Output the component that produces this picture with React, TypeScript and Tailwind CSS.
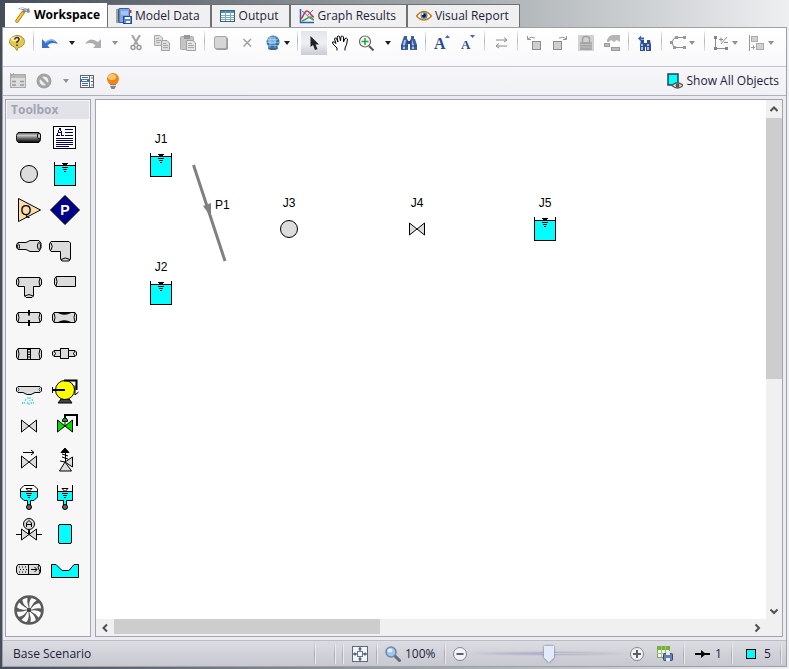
import { useState } from "react";
import type { ReactNode } from "react";

function Icon({ children }: { children: ReactNode }) {
  return (
    <svg width="16" height="16" viewBox="0 0 16 16" fill="none" className="shrink-0" aria-hidden="true">
      {children}
    </svg>
  );
}

function ToolButton({ label, active, children }: { label: string; active?: boolean; children: ReactNode }) {
  return (
    <button
      type="button"
      aria-label={label}
      className={
        active
          ? "flex h-6 w-[26px] items-center justify-center bg-linear-to-b from-[#e3e5ea] via-[#eeeff3] to-[#c9ccd6]"
          : "flex h-6 w-[26px] items-center justify-center"
      }
    >
      {children}
    </button>
  );
}

function Caret({ dim }: { dim?: boolean }) {
  return (
    <svg width="6" height="4" viewBox="0 0 6 4" className="shrink-0" aria-hidden="true">
      <path d="M0 0H6L3 4Z" fill={dim ? "#8f919c" : "#1b1b2b"} />
    </svg>
  );
}

function CaretButton({ label, dim }: { label: string; dim?: boolean }) {
  return (
    <button type="button" aria-label={label} className="flex h-6 w-[17px] items-center justify-center">
      <Caret dim={dim} />
    </button>
  );
}

function MenuButton({ label, dim, children }: { label: string; dim?: boolean; children: ReactNode }) {
  return (
    <button type="button" aria-label={label} className="flex h-6 w-9 items-center gap-[3px] pl-[5px]">
      {children}
      <Caret dim={dim} />
    </button>
  );
}

function Sep() {
  return (
    <div className="flex w-[7px] justify-center">
      <div className="h-5 w-px bg-linear-to-b from-[#eeeef2] via-[#b4b6c1] to-[#e2e3e8]" />
    </div>
  );
}

function Binoculars() {
  return (
    <>
      <path d="M3 1H6V4L7 5V15H0V10L2 4Z" fill="#3b5f9f" />
      <path d="M10 1H13V4L14 4L16 10V15H9V5L10 4Z" fill="#3b5f9f" />
      <path d="M6 6H10V9H6Z" fill="#274a86" />
      <path d="M3 5L2 10V14H4V10L5 5ZM11 5V14H13V10Z" fill="#a9c3ea" />
      <path d="M0 11H7M9 11H16" stroke="#23417a" />
    </>
  );
}

/* ---- toolbox / workspace shapes, all on a 36px cell ---- */

const GREY = "#dcdcdc";
const CYAN = "#00ffff";

function Cell({ children, smooth }: { children: ReactNode; smooth?: boolean }) {
  return (
    <svg
      width="36"
      height="36"
      viewBox="0 0 36 36"
      fill="none"
      stroke="#000"
      shapeRendering={smooth ? "auto" : "crispEdges"}
      aria-hidden="true"
    >
      {children}
    </svg>
  );
}

function Tank() {
  return (
    <Cell>
      <path d="M7.5 9.5H28.5V29.5H7.5Z" fill={CYAN} />
      <path d="M7.5 6V29.5H28.5V6" />
      <path d="M15 7H21V8H20V9H16V8H15Z" fill="#000" stroke="none" />
      <path d="M15 11.5H21M16 13.5H20M17 15.5H19" />
    </Cell>
  );
}

function Branch() {
  return (
    <Cell smooth>
      <circle cx="18" cy="18" r="8.5" fill={GREY} />
    </Cell>
  );
}

function Valve() {
  return (
    <Cell smooth>
      <path d="M10.5 12V24L18 18ZM25.5 12V24L18 18Z" fill={GREY} />
    </Cell>
  );
}

const tools: { name: string; icon: ReactNode }[] = [
  {
    name: "Pipe",
    icon: (
      <Cell smooth>
        <defs>
          <linearGradient id="pipe" x1="0" y1="0" x2="0" y2="1">
            <stop offset="0" stopColor="#555" />
            <stop offset="0.3" stopColor="#c8c8c8" />
            <stop offset="0.6" stopColor="#666" />
            <stop offset="1" stopColor="#000" />
          </linearGradient>
        </defs>
        <path d="M8 12.500H27Q29.500 12.500 29.500 17.500T27 22.500H8Q5.500 22.500 5.500 17.500T8 12.500Z" fill="url(#pipe)" />
        <ellipse cx="28" cy="16" rx="1.500" ry="3" fill="#ddd" />
      </Cell>
    ),
  },
  {
    name: "Annotation",
    icon: (
      <Cell>
        <rect x="6.500" y="6.500" width="22" height="22" fill="#fff" />
        <path d="M9 15.500H13M14 15.500H17M10.500 14.500V13M11.500 13V10M12.500 10V8M13.500 8V11M14.500 11V15M11 12.500H15M18 9.500H26M18 12.500H26M18 15.500H26M9 18.500H26M9 20.500H26M9 22.500H26M9 24.500H26M9 26.500H22" stroke="#00007a" />
      </Cell>
    ),
  },
  { name: "Branch", icon: <Branch /> },
  { name: "Reservoir", icon: <Tank /> },
  {
    name: "Assigned Flow",
    icon: (
      <Cell smooth>
        <path d="M7.500 6.500L29.500 18L7.500 29.500Z" fill="#ffdead" />
        <text x="15" y="23" textAnchor="middle" fill="#000" stroke="none" className="font-['Liberation_Sans'] text-[14px]">Q</text>
      </Cell>
    ),
  },
  {
    name: "Assigned Pressure",
    icon: (
      <Cell smooth>
        <path d="M18 3.500L32.500 18L18 32.500L3.500 18Z" fill="#00008b" />
        <text x="18" y="23" textAnchor="middle" fill="#fff" stroke="none" className="font-['Liberation_Sans'] text-[14px] font-bold">P</text>
      </Cell>
    ),
  },
  {
    name: "Area Change",
    icon: (
      <Cell smooth>
        <path d="M7 14.500H15L19 12.500H28L30 15V20L28 23.500H19L15 21.500H7L5.500 19.500V16.500Z" fill={GREY} />
        <ellipse cx="7.500" cy="18.500" rx="1" ry="2.500" fill={GREY} />
        <ellipse cx="28" cy="18" rx="1.500" ry="3.500" fill={GREY} />
      </Cell>
    ),
  },
  {
    name: "Bend",
    icon: (
      <Cell smooth>
        <path d="M4 13.500H22L23.500 15V31L22 33H15L13.500 31V23.500H4L2.500 21V16Z" fill={GREY} />
        <path d="M4 15Q6.500 18.500 4 22M14 31.500Q18 28.500 23 31.500" />
      </Cell>
    ),
  },
  {
    name: "Tee or Wye",
    icon: (
      <Cell smooth>
        <path d="M7 13.500H29L30.500 16V20L29 22.500H22.500V32L21 33.500H15L13.500 32V22.500H7L5.500 20V16Z" fill={GREY} />
        <path d="M7 14Q9 18 7 22M29 14Q27 18 29 22M14 32Q18 29 22 32" />
      </Cell>
    ),
  },
  {
    name: "Dead End",
    icon: (
      <Cell smooth>
        <path d="M9 12.500H28.500V22.500H9L7.500 20V15Z" fill={GREY} />
        <path d="M9 13Q11 17.500 9 22" />
      </Cell>
    ),
  },
  {
    name: "Orifice",
    icon: (
      <Cell smooth>
        <path d="M7 12.500H29L30.500 15V20L29 22.500H7L5.500 20V15Z" fill={GREY} />
        <path d="M7 13Q9 17.500 7 22M29 13Q27 17.500 29 22" />
        <path d="M18 10V15.500M18 20V26" strokeWidth="2" />
      </Cell>
    ),
  },
  {
    name: "Venturi",
    icon: (
      <Cell smooth>
        <path d="M7 12.500H28L29.500 15V20L28 22.500H7L5.500 20V15Z" fill={GREY} />
        <path d="M11 12.500Q17 16 24 12.500ZM11 22.500Q17 19 24 22.500Z" fill="#000" />
        <path d="M7 13Q9 17.500 7 22M28 13Q26 17.500 28 22" />
      </Cell>
    ),
  },
  {
    name: "Screen",
    icon: (
      <Cell smooth>
        <path d="M7 12.500H29L30.500 15V21L29 23.500H7L5.500 21V15Z" fill={GREY} />
        <path d="M7 13Q9 18 7 23M29 13Q27 18 29 23M16.500 13V23M19.500 13V23" />
        <path d="M18 13V23" strokeWidth="3" strokeDasharray="1 1.500" />
      </Cell>
    ),
  },
  {
    name: "General Component",
    icon: (
      <Cell smooth>
        <path d="M7 14.500H28L29.500 16V19L28 20.500H7L5.500 19V16Z" fill={GREY} />
        <path d="M7 15L8.500 17.500L7 20M28 15L26.500 17.500L28 20" />
        <rect x="13.500" y="12.500" width="8" height="10" fill={GREY} />
      </Cell>
    ),
  },
  {
    name: "Spray Discharge",
    icon: (
      <Cell smooth>
        <path d="M7 14.500H29L30.500 16V19L29 20.500H24L20 22.500H16L12 20.500H7L5.500 19V16Z" fill={GREY} />
        <path d="M7 15.500L8 17.500L7 19.500M29 15.500L28 17.500L29 19.500" stroke="#2b6f78" />
        <path d="M17 25V28M19 25V29M15 27L13 32M21 27L23 32M17 30L16 33M20 30L21 33M12 30L11 33M18 31V33" stroke="#22d3ee" strokeDasharray="2 1" />
      </Cell>
    ),
  },
  {
    name: "Pump",
    icon: (
      <Cell smooth>
        <path d="M14 27H22L25 31H11Z" fill="#444" />
        <circle cx="18" cy="18" r="9.500" fill="#ff0" />
        <path d="M6 18H18M17 8.500H29.500V18" strokeWidth="2" />
        <path d="M5.500 15V21M28 13.500V23L31.500 20" />
      </Cell>
    ),
  },
  { name: "Valve", icon: <Valve /> },
  {
    name: "Control Valve",
    icon: (
      <Cell smooth>
        <path d="M18 10V7H30V18" strokeWidth="2" />
        <path d="M10.500 12V24L18 18ZM25.500 12V24L18 18Z" fill="#00e000" />
        <path d="M18 18V13" />
        <path d="M15.500 13.500V12L17 10H19L20.500 12V13.500Z" fill="#00b000" />
      </Cell>
    ),
  },
  {
    name: "Check Valve",
    icon: (
      <Cell smooth>
        <path d="M10.500 12V24L18 18ZM25.500 12V24L18 18Z" fill={GREY} />
        <path d="M12 8.500H23M20 6L23 8.500L20 11" />
      </Cell>
    ),
  },
  {
    name: "Relief Valve",
    icon: (
      <Cell smooth>
        <path d="M18 18L12.500 27H24.500ZM18 18L25.500 13V23Z" fill={GREY} />
        <path d="M18.500 5V18M15 10L21 12M15 13L21 15M13 17L18 18" />
        <path d="M18 4L22 8.500H14Z" fill="#000" />
      </Cell>
    ),
  },
  {
    name: "Gas Accumulator",
    icon: (
      <Cell smooth>
        <path d="M9.500 11H26.500V17L23 20.500H19.500V26H16.500V20.500H13L9.500 17Z" fill={CYAN} />
        <path d="M9.500 11.500V9L13 5.500H23L26.500 9V11.500Z" fill="#fff" />
        <path d="M15 8.500H21L18 11.500Z" fill="#fff" />
        <path d="M15 13.500H21M16 15.500H20M17 17.500H19" />
        <circle cx="18" cy="27" r="2.500" fill="#666" />
      </Cell>
    ),
  },
  {
    name: "Surge Tank",
    icon: (
      <Cell smooth>
        <path d="M10.500 11.500H25.500V20.500H19.500V26H16.500V20.500H10.500Z" fill={CYAN} />
        <path d="M10.500 5V12M25.500 5V12" />
        <path d="M15 8.500H21L18 11.500Z" fill="#fff" />
        <path d="M15 13.500H21M16 15.500H20M17 17.500H19" />
        <circle cx="18" cy="27" r="2.500" fill="#666" />
      </Cell>
    ),
  },
  {
    name: "Vacuum Breaker Valve",
    icon: (
      <Cell smooth>
        <path d="M5 18.500H11M25 18.500H31" />
        <path d="M18 13V18" strokeWidth="2" />
        <path d="M10.500 13V24L18 18.500ZM25.500 13V24L18 18.500Z" fill={GREY} />
        <circle cx="18" cy="8" r="5.500" fill={GREY} />
        <path d="M15.500 11V7L18 4.500L20.500 7V11M15.500 8.500H20.500" />
      </Cell>
    ),
  },
  {
    name: "Liquid Accumulator",
    icon: (
      <Cell smooth>
        <rect x="11.500" y="8.500" width="13" height="19" rx="1.500" fill={CYAN} />
      </Cell>
    ),
  },
  {
    name: "Volume Balance",
    icon: (
      <Cell smooth>
        <path d="M7 12.500H28L29.500 15V20L28 22.500H7L5.500 20V15Z" fill={GREY} />
        <path d="M17.500 12.500V22.500M20 17.500H26M23.500 15L26 17.500L23.500 20M28 13Q26 15 28 17.500T28 22" />
        <path d="M8 15H16M9 17.500H16M8 20H16" strokeDasharray="1 2" />
      </Cell>
    ),
  },
  {
    name: "Weir",
    icon: (
      <Cell smooth>
        <path d="M4.500 12.500H9L15 18.500H22L27 12.500H31.500V25.500H4.500Z" fill={CYAN} />
      </Cell>
    ),
  },
  {
    name: "Turbine",
    icon: (
      <svg width="36" height="36" viewBox="0 -4 36 36" className="overflow-visible" aria-hidden="true">
        <circle cx="18" cy="18" r="13.500" fill="#fff" stroke="#5a5a5a" strokeWidth="2.500" />
        {[0, 45, 90, 135, 180, 225, 270, 315].map((a) => (
          <path key={a} d="M17.500 15Q15.500 10 16.500 5L21 5.500Q17.500 9 18.500 15Z" fill="#5a5a5a" transform={`rotate(${a} 18 18)`} />
        ))}
        <circle cx="18" cy="18" r="2.500" fill="#444" />
      </svg>
    ),
  },
];

const nodes = [
  { name: "J1", icon: <Tank />, pos: "left-[47px] top-[31px]" },
  { name: "J2", icon: <Tank />, pos: "left-[47px] top-[159px]" },
  { name: "J3", icon: <Branch />, pos: "left-[175px] top-[95px]" },
  { name: "J4", icon: <Valve />, pos: "left-[303px] top-[95px]" },
  { name: "J5", icon: <Tank />, pos: "left-[431px] top-[95px]" },
];

const tabs: { name: string; icon: ReactNode }[] = [
  {
    name: "Workspace",
    icon: (
      <Icon>
        <path d="M8 5.500L2 14" stroke="#b57806" strokeWidth="3.500" strokeLinecap="round" />
        <path d="M8 5.500L2 14" stroke="#ffc52e" strokeWidth="2" strokeLinecap="round" />
        <path d="M3 2Q6 -0.500 10 1L12 2L14 1L15 5L13 6L11 4.500L9.500 6.500L7 5L8 3Q5 2 3 2Z" fill="#8b8b8b" />
        <path d="M5 1.500L9 1.500L12 4" stroke="#ddd" />
      </Icon>
    ),
  },
  {
    name: "Model Data",
    icon: (
      <Icon>
        <rect x="2.500" y="0.500" width="11" height="14" rx="1" fill="#7fa8e6" stroke="#2f5fb3" />
        <path d="M14.500 2V5" stroke="#d33" strokeWidth="2" />
        <path d="M5 4H12M5 6H12" stroke="#cfe0fa" />
        <path d="M0 2H4M0 4H4M0 6H4M0 8H4M0 10H4M0 12H4M0 14H4" stroke="#555" />
        <rect x="7.500" y="8.500" width="8" height="7" fill="#5c8cd8" stroke="#234a8e" />
        <path d="M9 9H14V11H9ZM10 13H14V15H10Z" fill="#fff" />
      </Icon>
    ),
  },
  {
    name: "Output",
    icon: (
      <Icon>
        <rect x="0.500" y="2.500" width="14" height="11" fill="#fff" stroke="#2d6383" />
        <path d="M1 3H14V5H1Z" fill="#4b8ca8" />
        <path d="M1 7.500H14M1 9.500H14M1 11.500H14M5.500 3V13M10.500 3V13" stroke="#79a9ba" />
      </Icon>
    ),
  },
  {
    name: "Graph Results",
    icon: (
      <Icon>
        <path d="M1.500 1V14.500H15" stroke="#3159b8" strokeWidth="1.500" />
        <path d="M2 11C5 8 5 3 8 3S11 8 15 9" stroke="#e03333" strokeWidth="1.500" />
        <path d="M3 3C7 5 9 10 14 12" stroke="#4a78dc" />
        <path d="M3 13C7 12 9 9 11 9S13 11 15 12" stroke="#37a44a" strokeWidth="1.500" />
        <path d="M8 8L14 2" stroke="#4a78dc" />
      </Icon>
    ),
  },
  {
    name: "Visual Report",
    icon: (
      <Icon>
        <path d="M0.500 8Q8 -1 15.500 8Q8 16 0.500 8Z" fill="#fff" stroke="#c27a16" strokeWidth="1.500" />
        <circle cx="8" cy="7.500" r="3.500" fill="#5d8db3" />
        <circle cx="8" cy="7.500" r="2" fill="#0b1e33" />
        <circle cx="6.500" cy="6" r="1" fill="#fff" />
      </Icon>
    ),
  },
];

function MainToolbar() {
  return (
    <div className="flex h-[39px] border-b border-[#c3c5d1] bg-linear-to-b from-white to-[#f8f8fa] pt-[3px] pl-px">
      <ToolButton label="Help">
        <Icon>
          <path d="M8 0.500C12 0.500 15.500 3 15.500 6.500S12 12.500 9 12.500L8 15.500L5.500 12C2.500 11 0.500 9 0.500 6.500S4 0.500 8 0.500Z" fill="#e5c84a" stroke="#a88d2b" />
          <ellipse cx="7" cy="4" rx="5" ry="2.500" fill="#f8ecaa" />
          <path d="M5.500 4.500Q6 2.500 8 2.500T10 4.800Q9.500 6 8 7V8M8 9.500V11" stroke="#333" strokeWidth="1.600" />
        </Icon>
      </ToolButton>
      <Sep />
      <ToolButton label="Undo">
        <Icon>
          <path d="M0 4V13H8L5.500 10.500Q9 6.500 16 9Q11 1 3 7Z" fill="#3c6fcb" />
          <path d="M3 8Q9 3 13 6.500" stroke="#7fb2f2" strokeWidth="1.500" />
        </Icon>
      </ToolButton>
      <CaretButton label="Undo list" />
      <ToolButton label="Redo">
        <Icon>
          <path d="M16 4V13H8L10.500 10.500Q7 6.500 0 9Q5 1 13 7Z" fill="#adadb0" />
        </Icon>
      </ToolButton>
      <CaretButton label="Redo list" dim />
      <ToolButton label="Cut">
        <Icon>
          <path d="M4 0L10 10M12 0L6 10" stroke="#a2a2a5" strokeWidth="2" />
          <circle cx="5" cy="12.500" r="2" stroke="#999" strokeWidth="1.500" />
          <circle cx="11" cy="12.500" r="2" stroke="#999" strokeWidth="1.500" />
        </Icon>
      </ToolButton>
      <ToolButton label="Copy">
        <Icon>
          <path d="M0.500 0.500H6L8.500 3V10.500H0.500Z" fill="#dedede" stroke="#aaa" />
          <path d="M2 3.500H5M2 5.500H7M2 7.500H6" stroke="#aaa" />
          <path d="M7.500 5.500H13L15.500 8V15.500H7.500Z" fill="#dcdcdc" stroke="#a2a2a2" />
          <path d="M9 8.500H12M9 10.500H14M9 12.500H14" stroke="#aaa" />
        </Icon>
      </ToolButton>
      <ToolButton label="Paste">
        <Icon>
          <rect x="0.500" y="1.500" width="13" height="13" rx="1" fill="#c4c4c4" stroke="#aaa" />
          <rect x="4" y="0" width="6" height="4" fill="#999" />
          <path d="M6.500 5.500H13L15.500 8V15.500H6.500Z" fill="#e4e4e4" stroke="#a2a2a2" />
          <path d="M8 8.500H12M8 10.500H14M8 12.500H14" stroke="#aaa" />
        </Icon>
      </ToolButton>
      <Sep />
      <ToolButton label="Duplicate">
        <Icon>
          <rect x="2" y="2" width="13" height="13" rx="2" fill="#9c9c9c" />
          <rect x="1.500" y="1.500" width="12" height="12" rx="1.500" fill="#d6d6d6" stroke="#a8a8a8" />
        </Icon>
      </ToolButton>
      <ToolButton label="Delete">
        <Icon>
          <path d="M4.500 4L12 11.500M12 4L4.500 11.500" stroke="#a0a0a0" strokeWidth="1.500" />
        </Icon>
      </ToolButton>
      <button type="button" aria-label="Globe" className="flex h-6 w-[34px] items-center gap-[3px] pl-[5px]">
        <Icon>
          <ellipse cx="8" cy="13" rx="5" ry="2" fill="#49627c" />
          <circle cx="8" cy="7" r="6.500" fill="#2f74b0" />
          <ellipse cx="7" cy="5.500" rx="4.500" ry="4" fill="#7fb3dc" />
          <path d="M2 4.500H13M1 7.500H14M2 10.500H13M5 1V13M10 1V13" stroke="#c4dff3" strokeWidth="0.500" />
        </Icon>
        <Caret />
      </button>
      <Sep />
      <ToolButton label="Select" active>
        <Icon>
          <path d="M4.500 1V12L7 10L9 15L11.500 14L9.500 9.500H13Z" fill="#222" />
        </Icon>
      </ToolButton>
      <ToolButton label="Pan">
        <Icon>
          <path d="M5 15.500V13L1 9L0.500 7Q2 6 4 8.500L2.500 4Q3 2 4.500 3.500L6 7L5 2Q6 0 7.500 1.500L8.500 6L9 1.500Q10.500 0 11.500 2L11.500 7L13 3.500Q14.500 2.500 15.500 4Q15 10 13 13V15.500" fill="#fff" stroke="#000" />
        </Icon>
      </ToolButton>
      <ToolButton label="Zoom">
        <Icon>
          <circle cx="7" cy="6.500" r="5.500" fill="#f5fbf5" stroke="#666" strokeWidth="1.200" />
          <path d="M7 3V10M3.500 6.500H10.500" stroke="#1da535" strokeWidth="1.500" />
          <path d="M11 11L15.500 15.500" stroke="#555" strokeWidth="2" />
        </Icon>
      </ToolButton>
      <CaretButton label="Zoom list" />
      <ToolButton label="Find">
        <Icon>
          <Binoculars />
        </Icon>
      </ToolButton>
      <Sep />
      <ToolButton label="Increase font size">
        <Icon>
          <text x="0" y="14" fill="#294b96" className="font-['Liberation_Serif'] text-[16px] font-bold">A</text>
          <path d="M11 3H16L13.500 0Z" fill="#3f68b3" />
        </Icon>
      </ToolButton>
      <ToolButton label="Decrease font size">
        <Icon>
          <text x="1" y="14" fill="#294b96" className="font-['Liberation_Serif'] text-[13px] font-bold">A</text>
          <path d="M10 0H15L12.500 3Z" fill="#3f68b3" />
        </Icon>
      </ToolButton>
      <Sep />
      <ToolButton label="Reverse direction">
        <Icon>
          <path d="M3 5H14M11 2.500L14 5L11 7M14 11H3M6 8.500L3 11L6 13" stroke="#8b8b8b" />
        </Icon>
      </ToolButton>
      <Sep />
      <ToolButton label="Rotate left">
        <Icon>
          <path d="M1.500 1V4.500H5M1.500 4Q5 1 9 3" stroke="#999" />
          <rect x="6.500" y="6.500" width="8" height="8" fill="#cfcfcf" stroke="#8d8d8d" />
        </Icon>
      </ToolButton>
      <ToolButton label="Rotate right">
        <Icon>
          <path d="M14.500 1V4.500H11M14.500 4Q11 1 7 3" stroke="#999" />
          <rect x="1.500" y="6.500" width="8" height="8" fill="#cfcfcf" stroke="#8d8d8d" />
        </Icon>
      </ToolButton>
      <ToolButton label="Lock">
        <Icon>
          <rect width="16" height="16" fill="#d2d2d2" />
          <path d="M4.500 7V4Q4.500 1.500 8 1.500T11.500 4V7" stroke="#a2a2a2" strokeWidth="1.500" />
          <rect x="2" y="7" width="12" height="8" rx="1" fill="#a6a6a6" />
          <path d="M2 9.500H14M2 12H14" stroke="#bdbdbd" />
        </Icon>
      </ToolButton>
      <ToolButton label="Merge">
        <Icon>
          <path d="M3 5Q5 0 9 0H16V7L13 5L10 7L7 5L5 7H3Z" fill="#b5b5b5" />
          <rect x="0.500" y="8.500" width="5" height="3" fill="#bbb" stroke="#999" />
          <rect x="7.500" y="12.500" width="8" height="3" fill="#bbb" stroke="#999" />
        </Icon>
      </ToolButton>
      <Sep />
      <ToolButton label="Find previous">
        <Icon>
          <path d="M1 3.500L4 0.500V2.500H7V4.500H4V6.500Z" fill="#2e62c4" />
          <path d="M4 5H7V8H10V5H13L14 10V16H9V11H8V16H3V10Z" fill="#2f4f8f" />
          <path d="M5 9V15M11 9V15" stroke="#a9c0ea" strokeWidth="2" />
          <path d="M4 11.500H14" stroke="#2f4f8f" />
        </Icon>
      </ToolButton>
      <Sep />
      <MenuButton label="Pipe drawing" dim>
        <Icon>
          <path d="M14 2.500H6Q4 2.500 3 5T2 8L4 12.500H14" stroke="#8d8d8d" />
          <path d="M5 1H8V4H5ZM13 1H16V4H13ZM0 6H3V9H0ZM3 11H6V14H3ZM13 11H16V14H13Z" fill="#999" />
        </Icon>
      </MenuButton>
      <Sep />
      <MenuButton label="Coordinates" dim>
        <Icon>
          <path d="M2.500 2V13.500H14M6 4.500H10M8 2.500V6.500M8 9L14 2M11 7.500H15" stroke="#8d8d8d" />
          <path d="M1 1H4V4H1ZM1 12H4V15H1ZM12 12H15V15H12Z" fill="#858585" />
        </Icon>
      </MenuButton>
      <MenuButton label="Align" dim>
        <Icon>
          <path d="M0.500 0V16M2 12.500H6M4.500 10.500V14.500" stroke="#999" />
          <rect x="2.500" y="1.500" width="6" height="5" fill="#d0d0d0" stroke="#aaa" />
          <rect x="7.500" y="8.500" width="7" height="6" fill="#d0d0d0" stroke="#aaa" />
        </Icon>
      </MenuButton>
    </div>
  );
}

function SecondToolbar() {
  return (
    <div className="flex h-[29px] items-center border-b border-[#aeb0bb] bg-linear-to-b from-[#f6f6f9] to-[#f0f1f4] pr-[7px] pl-[2px]">
      <ToolButton label="Properties">
        <Icon>
          <rect x="0.500" y="1.500" width="15" height="13" fill="#ddd" stroke="#aaa" />
          <path d="M1 2H15V5H1Z" fill="#b9b9b9" />
          <path d="M2 8.500H6M2 12H6M10 8.500H14M10 12H14" stroke="#999" strokeWidth="1.500" />
          <path d="M0 0L4 4M4 0L0 4" stroke="#aaa" />
        </Icon>
      </ToolButton>
      <ToolButton label="Disable">
        <Icon>
          <circle cx="8" cy="8" r="6" fill="#ededed" stroke="#a3a3a3" strokeWidth="3" />
          <path d="M4 4L12 12" stroke="#a3a3a3" strokeWidth="3" />
        </Icon>
      </ToolButton>
      <CaretButton label="Disable list" dim />
      <ToolButton label="Inspect">
        <Icon>
          <rect x="1.500" y="2.500" width="13" height="12" fill="#fff" stroke="#57657c" />
          <path d="M10.500 3V14M3 4.500H9M3 10.500H9M3 12.500H9M12 5H14M12 8.500H14M12 12H14" stroke="#57657c" />
          <path d="M2 6H10V9H2Z" fill="#3974cf" />
          <path d="M3 7.500H8" stroke="#fff" />
        </Icon>
      </ToolButton>
      <ToolButton label="Highlight">
        <Icon>
          <circle cx="8" cy="6" r="6" fill="#ef8518" />
          <ellipse cx="7" cy="4" rx="4" ry="3" fill="#ffc56e" />
          <path d="M5 11H11V13L9.500 16H6.500L5 13Z" fill="#8c8278" />
          <path d="M5 12.500H11" stroke="#ddd" />
        </Icon>
      </ToolButton>
      <button type="button" className="ml-auto flex items-center gap-[3px] whitespace-nowrap text-[#1b1e3c]">
        <Icon>
          <rect x="1" y="1" width="10" height="11" fill={CYAN} stroke="#26404a" strokeWidth="1.500" />
          <path d="M5 12.500Q10.500 7 16 12.500Q10.500 17.500 5 12.500Z" fill="#fff" stroke="#555" strokeWidth="1.300" />
          <circle cx="10.500" cy="12.500" r="2" fill="#555" />
        </Icon>
        Show All Objects
      </button>
    </div>
  );
}

function Chevron({ d }: { d: string }) {
  return (
    <svg width="10" height="10" viewBox="0 0 10 10" fill="none" stroke="#505050" strokeWidth="2" aria-hidden="true">
      <path d={d} />
    </svg>
  );
}

function StatusSep() {
  return (
    <div className="flex h-5">
      <div className="w-px bg-linear-to-b from-[#d0d1d8] via-[#a9abb6] to-[#b5b7c1]" />
      <div className="w-px bg-[#e9eaee]" />
    </div>
  );
}

export default function App() {
  const [tab, setTab] = useState("Workspace");
  const [zoom, setZoom] = useState(50);

  return (
    <div className="flex min-h-screen flex-col bg-linear-to-r from-[#454d59] via-[#90979b] via-45% to-[#eeeff1] pr-[2px] pb-[2px] pl-[2px] font-['Open_Sans',sans-serif] text-[12px] text-[#1b1e3c]">
      <div role="tablist" className="flex h-[27px] items-end pl-[3px]">
        {tabs.map((t) => (
          <button
            key={t.name}
            type="button"
            role="tab"
            aria-selected={tab === t.name}
            onClick={() => setTab(t.name)}
            className={
              tab === t.name
                ? "flex h-[24px] items-center gap-[3px] bg-white pr-[7px] pl-[10px] font-bold whitespace-nowrap text-black"
                : "flex h-[23px] items-center gap-[3px] border-t border-r border-l border-[#6d7075] bg-[#f0f0f0] pr-[10px] pl-2 whitespace-nowrap"
            }
          >
            {t.icon}
            {t.name}
          </button>
        ))}
      </div>

      <div className="flex grow flex-col border border-[#9da0ab] bg-[#ececf0]">
        <MainToolbar />
        <SecondToolbar />

        <div className="flex grow gap-1 py-[3px] pr-[3px] pl-[2px]">
          <aside className="flex w-[86px] shrink-0 flex-col border border-[#a0a3b0] bg-[#f7f7f7]">
            <h2 className="m-px h-[18px] bg-[#e2e3e8] pl-1 leading-[18px] font-bold text-[#a1a4b1]">Toolbox</h2>
            <div className="grid grid-cols-[36px_36px] pl-[5px]">
              {tools.map((t) => (
                <button key={t.name} type="button" aria-label={t.name} className="size-9">
                  {t.icon}
                </button>
              ))}
            </div>
          </aside>

          <main className="flex min-w-0 grow flex-col border border-[#a0a3b0] bg-white">
            <div className="flex grow">
              <div className="relative grow overflow-hidden font-['Liberation_Sans',sans-serif] text-black">
                {nodes.map((n) => (
                  <div key={n.name} className={`absolute flex w-9 flex-col items-center ${n.pos}`}>
                    <span className="h-4 leading-4">{n.name}</span>
                    {n.icon}
                  </div>
                ))}
                <svg width="40" height="102" viewBox="0 0 40 102" fill="none" className="absolute top-[63px] left-[94px]" aria-hidden="true">
                  <path d="M3.500 2L35 98" stroke="#808080" strokeWidth="3" />
                  <path d="M13 43L21 40L21 54Z" fill="#808080" />
                </svg>
                <span className="absolute top-[97px] left-[119px] leading-4">P1</span>
              </div>
              <div className="flex w-4 flex-col bg-[#f0f0f0]">
                <button type="button" aria-label="Scroll up" className="flex h-[18px] items-center justify-center">
                  <Chevron d="M1.500 7L5 3.500L8.500 7" />
                </button>
                <div className="flex grow flex-col">
                  <div className="h-[54%] bg-[#cdcdcd]" />
                </div>
                <button type="button" aria-label="Scroll down" className="flex h-[17px] items-center justify-center">
                  <Chevron d="M1.500 3.500L5 7L8.500 3.500" />
                </button>
              </div>
            </div>
            <div className="flex h-[17px] bg-[#f0f0f0] pr-[17px]">
              <button type="button" aria-label="Scroll left" className="flex w-[18px] items-center justify-center">
                <Chevron d="M7 1.500L3.500 5L7 8.500" />
              </button>
              <div className="flex grow">
                <div className="h-[15px] w-[42%] bg-[#cdcdcd]" />
              </div>
              <button type="button" aria-label="Scroll right" className="flex w-[17px] items-center justify-center">
                <Chevron d="M3.500 1.500L7 5L3.500 8.500" />
              </button>
            </div>
          </main>
        </div>

        <footer className="flex h-[26px] items-center border-t border-[#b9bbc5] bg-linear-to-b from-[#dcdde2] to-[#c7c8d0] pr-1">
          <span className="grow pl-[10px]">Base Scenario</span>
          <StatusSep />
          <div className="w-[18px]" />
          <StatusSep />
          <div className="w-[6px]" />
          <StatusSep />
          <button type="button" aria-label="Zoom to fit" className="flex w-8 justify-center">
            <Icon>
              <rect x="0.500" y="0.500" width="15" height="15" fill="#f4f8fc" stroke="#596a83" />
              <rect x="5.500" y="5.500" width="5" height="5" stroke="#69758b" />
              <path d="M8 1V5M8 11V15M1 8H5M11 8H15M6.500 3H9.500M6.500 13H9.500M3 6.500V9.500M13 6.500V9.500" stroke="#26354f" />
            </Icon>
          </button>
          <StatusSep />
          <label htmlFor="zoom" className="flex w-[66px] items-center gap-1 pl-[7px]">
            <Icon>
              <path d="M10 10L14.500 14.500" stroke="#666b75" strokeWidth="3" strokeLinecap="round" />
              <circle cx="6" cy="6" r="5" fill="#9fc6ef" stroke="#7089a6" strokeWidth="1.500" />
              <ellipse cx="5" cy="4.500" rx="2.500" ry="2" fill="#e2f0fd" />
            </Icon>
            <span>100%</span>
          </label>
          <StatusSep />
          <button type="button" aria-label="Zoom out" onClick={() => setZoom(zoom - 10)} className="flex w-6 justify-center pl-1">
            <Icon>
              <circle cx="8" cy="8" r="6.500" fill="#f3f3f5" stroke="#84858e" />
              <path d="M4.500 8H11.500" stroke="#5c5e69" strokeWidth="2" />
            </Icon>
          </button>
          <input
            id="zoom"
            type="range"
            value={zoom}
            onChange={(e) => setZoom(Number(e.target.value))}
            className="h-5 w-[158px] appearance-none bg-transparent drop-shadow-[0_0_1px_#56607e] [&::-webkit-slider-runnable-track]:h-5 [&::-webkit-slider-runnable-track]:bg-[linear-gradient(90deg,transparent,#c3a5dc_45%,#c3a5dc_50%,#c9cad3_55%,transparent)] [&::-webkit-slider-runnable-track]:bg-[length:100%_1px] [&::-webkit-slider-runnable-track]:bg-center [&::-webkit-slider-runnable-track]:bg-no-repeat [&::-webkit-slider-thumb]:mt-[2px] [&::-webkit-slider-thumb]:h-[17px] [&::-webkit-slider-thumb]:w-[10px] [&::-webkit-slider-thumb]:appearance-none [&::-webkit-slider-thumb]:bg-[#e3eafb] [&::-webkit-slider-thumb]:[clip-path:polygon(0_0,100%_0,100%_70%,50%_100%,0_70%)]"
          />
          <button type="button" aria-label="Zoom in" onClick={() => setZoom(zoom + 10)} className="flex w-[18px] justify-center">
            <Icon>
              <circle cx="8" cy="8" r="6.500" fill="#f3f3f5" stroke="#84858e" />
              <path d="M4 8H12M8 4V12" stroke="#5c5e69" strokeWidth="2" />
            </Icon>
          </button>
          <button type="button" aria-label="Print" className="flex w-[37px] justify-center">
            <Icon>
              <rect x="0.500" y="0.500" width="12" height="11" fill="#f3faea" stroke="#7da35a" />
              <path d="M0 0H13V4H0Z" fill="#76b12f" />
              <path d="M0 7.500H12M4.500 0V11M8.500 0V11" stroke="#a9bd94" />
              <rect x="6.500" y="7.500" width="9" height="7" rx="1" fill="#6580b4" stroke="#31466f" />
              <path d="M9 5H13V9H9ZM9 12H13V15H9Z" fill="#e6eefb" />
            </Icon>
          </button>
          <StatusSep />
          <div className="flex w-[46px] items-center gap-1 pl-[10px]">
            <Icon>
              <path d="M0 8H15" stroke="#000" strokeWidth="2" />
              <path d="M6 4L11 8L6 12Z" fill="#000" />
            </Icon>
            <span>1</span>
          </div>
          <StatusSep />
          <div className="flex w-[47px] items-center gap-1 pl-[11px]">
            <Icon>
              <rect x="2.500" y="3.500" width="9" height="9" fill={CYAN} stroke="#000" />
            </Icon>
            <span>5</span>
          </div>
          <StatusSep />
        </footer>
      </div>
    </div>
  );
}
